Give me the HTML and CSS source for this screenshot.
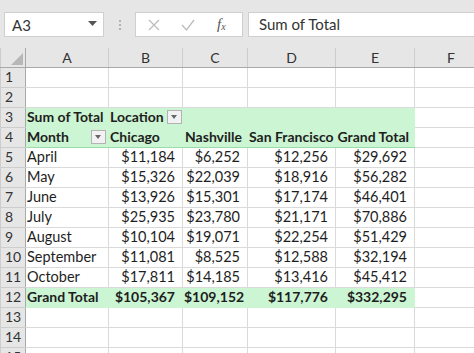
FILE: index.html
```html
<!DOCTYPE html>
<html>
<head>
<meta charset="utf-8">
<link rel="stylesheet" href="styles.css">
</head>
<body>
<div class="toolbar">
  <div class="namebox"><span>A3</span><svg class="caret" width="9" height="5" viewBox="0 0 9 5"><path d="M0 0h9L4.5 5z" fill="#555"/></svg></div>
  <div class="dots"><i></i><i></i><i></i></div>
  <div class="fxbox">
    <svg width="14" height="14" viewBox="0 0 14 14"><path d="M2 2l10 10M12 2L2 12" stroke="#bdbdbd" stroke-width="1.3" fill="none"/></svg>
    <svg width="16" height="14" viewBox="0 0 16 14"><path d="M2 7l4.5 5L14 2" stroke="#bdbdbd" stroke-width="1.3" fill="none"/></svg>
    <span class="fx">f<sub>x</sub></span>
  </div>
  <div class="formula">Sum of Total</div>
</div>
<table class="grid">
  <colgroup><col class="c0"><col class="ca"><col class="cb"><col class="cc"><col class="cd"><col class="ce"><col class="cf"></colgroup>
  <tr class="hdr"><th class="corner"><svg width="12" height="12" viewBox="0 0 12 12"><path d="M12 0V12H0z" fill="#b7b7b7"/></svg></th><th>A</th><th>B</th><th>C</th><th>D</th><th>E</th><th>F</th></tr>
  <tr><th>1</th><td></td><td></td><td></td><td></td><td></td><td></td></tr>
  <tr><th>2</th><td></td><td></td><td></td><td></td><td></td><td></td></tr>
  <tr class="pv"><th>3</th><td class="g b">Sum of Total</td><td class="g b"><span class="lbl">Location<span class="dd"></span></span></td><td class="g"></td><td class="g"></td><td class="g"></td><td></td></tr>
  <tr class="pv hb"><th>4</th><td class="g b"><span class="lbl sp">Month<span class="dd"></span></span></td><td class="g b">Chicago</td><td class="g b r">Nashville</td><td class="g b r">San Francisco</td><td class="g b r">Grand Total</td><td></td></tr>
  <tr><th>5</th><td>April</td><td class="r">$11,184</td><td class="r">$6,252</td><td class="r">$12,256</td><td class="r">$29,692</td><td></td></tr>
  <tr><th>6</th><td>May</td><td class="r">$15,326</td><td class="r">$22,039</td><td class="r">$18,916</td><td class="r">$56,282</td><td></td></tr>
  <tr><th>7</th><td>June</td><td class="r">$13,926</td><td class="r">$15,301</td><td class="r">$17,174</td><td class="r">$46,401</td><td></td></tr>
  <tr><th>8</th><td>July</td><td class="r">$25,935</td><td class="r">$23,780</td><td class="r">$21,171</td><td class="r">$70,886</td><td></td></tr>
  <tr><th>9</th><td>August</td><td class="r">$10,104</td><td class="r">$19,071</td><td class="r">$22,254</td><td class="r">$51,429</td><td></td></tr>
  <tr><th>10</th><td>September</td><td class="r">$11,081</td><td class="r">$8,525</td><td class="r">$12,588</td><td class="r">$32,194</td><td></td></tr>
  <tr class="pre"><th>11</th><td>October</td><td class="r">$17,811</td><td class="r">$14,185</td><td class="r">$13,416</td><td class="r">$45,412</td><td></td></tr>
  <tr class="tot"><th>12</th><td class="g b">Grand Total</td><td class="g b r">$105,367</td><td class="g b r">$109,152</td><td class="g b r">$117,776</td><td class="g b r">$332,295</td><td></td></tr>
  <tr><th>13</th><td></td><td></td><td></td><td></td><td></td><td></td></tr>
  <tr><th>14</th><td></td><td></td><td></td><td></td><td></td><td></td></tr>
  <tr><th>15</th><td></td><td></td><td></td><td></td><td></td><td></td></tr>
</table>
</body>
</html>
```
FILE: styles.css
```css
html, body { margin: 0; padding: 0; background: #fff; overflow: hidden; }
body { width: 474px; height: 353px; font-family: Lato, "Liberation Sans", sans-serif; color: #1e1e1e; }

.toolbar {
  height: 48px;
  background: #e6e6e6;
  display: flex;
  align-items: flex-start;
  padding-top: 12px;
  box-sizing: border-box;
}
.namebox {
  margin-left: 4px;
  width: 100px;
  height: 25px;
  box-sizing: border-box;
  background: #fff;
  border: 1px solid #cfcfcf;
  display: flex;
  align-items: center;
  justify-content: space-between;
  padding: 0 6px 0 7px;
  font-size: 15px;
  color: #333;
}
.caret { margin-top: -2px; }
.dots {
  width: 31px;
  height: 25px;
  display: flex;
  flex-direction: column;
  align-items: center;
  justify-content: center;
  gap: 2px;
}
.dots i { width: 2px; height: 2px; background: #b3b3b3; display: block; }
.fxbox {
  width: 108px;
  height: 25px;
  box-sizing: border-box;
  background: #fff;
  border: 1px solid #cfcfcf;
  display: flex;
  align-items: center;
  padding-left: 11px;
  gap: 19px;
}
.fx {
  font-family: "Liberation Serif", serif;
  font-style: italic;
  font-size: 15px;
  color: #555;
  margin-left: 2px;
}
.fx sub { font-size: 10px; vertical-align: -1px; }
.formula {
  margin-left: 5px;
  flex: 1;
  height: 25px;
  box-sizing: border-box;
  background: #fff;
  border: 1px solid #cfcfcf;
  border-right: none;
  padding-left: 10px;
  font-size: 15px;
  line-height: 23px;
  color: #333;
}

.grid {
  border-collapse: collapse;
  table-layout: fixed;
  width: 487px;
  font-size: 14.5px;
}
.c0 { width: 25px; }
.ca { width: 83px; }
.cb { width: 74px; }
.cc { width: 65px; }
.cd { width: 88px; }
.ce { width: 79px; }
.cf { width: 73px; }

.grid tr { height: 20px; }
.grid tr.hdr { height: 19px; }
.grid td {
  border: 1px solid #dadada;
  padding: 0 7px 0 1px;
  white-space: nowrap;
  overflow: visible;
  line-height: 18px;
  height: 19px;
  box-sizing: border-box;
}
.grid th {
  background: #e6e6e6;
  border: 1px solid #cdcdcd;
  font-weight: normal;
  font-size: 14px;
  color: #333;
  padding: 0;
  text-align: center;
  border-right-color: #a9a9a9;
  line-height: 18px;
}
.grid tr.hdr th {
  border-bottom-color: #a9a9a9;
  border-right-color: #cdcdcd;
  border-top: none;
  height: 18px;
  line-height: 17px;
  padding: 0;
}
.grid tr.hdr th.corner { border-right-color: #a9a9a9; vertical-align: bottom; }
.corner svg { display: block; margin: 0 2px 2px auto; }
.grid th:first-child { text-align: left; padding-left: 4px; }
.grid tr.hdr th.corner { padding-left: 0; }

.g { background: #ccf5d3; border-color: #ccf5d3 !important; }
.b { font-weight: 700; font-size: 14px; }
.r { text-align: right; }
.grid tr.pv td.g { border-left-color: #ccf5d3; border-right-color: #ccf5d3; }
.grid tr.hb td.g { border-bottom: 1px solid #9adca8 !important; }
.grid tr.tot td.g { border-top: 1px solid #9adca8 !important; }
.grid tr.hb td.g.r { padding-right: 5px; }

.lbl { display: flex; align-items: center; gap: 3px; }
.lbl.sp { justify-content: space-between; margin-right: -5px; }
.dd {
  flex-shrink: 0;
  width: 15px;
  height: 14px;
  box-sizing: border-box;
  border: 1px solid #b3b3b3;
  background: #f2f2f2;
  position: relative;
  display: inline-block;
}
.dd::after {
  content: "";
  position: absolute;
  left: 3px;
  top: 4px;
  border-left: 3.5px solid transparent;
  border-right: 3.5px solid transparent;
  border-top: 4px solid #666;
}
```
